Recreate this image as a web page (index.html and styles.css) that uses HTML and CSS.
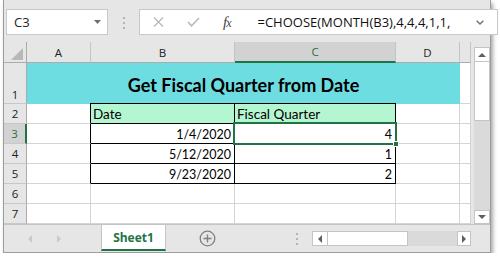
FILE: index.html
```html
<!DOCTYPE html>
<html>
<head>
<meta charset="utf-8">
<link rel="stylesheet" href="styles.css">
</head>
<body>
<div class="window">
  <div class="formulabar">
    <div class="namebox">
      <span class="nb-text">C3</span>
      <svg class="nb-arrow" width="7" height="4" viewBox="0 0 7 4"><path d="M0 0H7L3.5 4Z" fill="#6f6f6f"/></svg>
    </div>
    <svg class="fdots" width="3" height="12" viewBox="0 0 3 12"><rect x="0" y="0" width="2" height="2" fill="#b4b4b4"/><rect x="0" y="5" width="2" height="2" fill="#b4b4b4"/><rect x="0" y="10" width="2" height="2" fill="#b4b4b4"/></svg>
    <div class="fbox">
      <svg class="ico-x" width="11" height="10" viewBox="0 0 11 10"><path d="M1 0.5L10 9.5M10 0.5L1 9.5" stroke="#b9b9b9" stroke-width="1.3" fill="none"/></svg>
      <svg class="ico-check" width="13" height="10" viewBox="0 0 13 10"><path d="M1 5L4.5 8.8L12 1" stroke="#b9b9b9" stroke-width="1.5" fill="none"/></svg>
      <span class="fx">f<span class="fx-x">x</span></span>
      <span class="ftext">=CHOOSE(MONTH(B3),4,4,4,1,1,</span>
      <svg class="ico-chev" width="8" height="5" viewBox="0 0 8 5"><path d="M0.7 0.7L4 4L7.3 0.7" stroke="#707070" stroke-width="1.4" fill="none"/></svg>
    </div>
  </div>

  <div class="main">
    <div class="grid">
      <div class="ch corner"><svg width="12" height="12" viewBox="0 0 12 12"><path d="M12 0V12H0Z" fill="#b8b8b8"/></svg></div>
      <div class="ch">A</div>
      <div class="ch">B</div>
      <div class="ch sel">C</div>
      <div class="ch">D</div>
      <div class="ch part"></div>

      <div class="rh r1">1</div>
      <div class="title">Get Fiscal Quarter from Date</div>
      <div class="c"></div>

      <div class="rh">2</div>
      <div class="c tl"></div>
      <div class="c tb th">Date</div>
      <div class="c tb th">Fiscal Quarter</div>
      <div class="c"></div>
      <div class="c"></div>

      <div class="rh sel">3</div>
      <div class="c tl"></div>
      <div class="c tb num">1/4/2020</div>
      <div class="c tb num active">4<span class="handle"></span></div>
      <div class="c"></div>
      <div class="c"></div>

      <div class="rh">4</div>
      <div class="c tl"></div>
      <div class="c tb num">5/12/2020</div>
      <div class="c tb num">1</div>
      <div class="c"></div>
      <div class="c"></div>

      <div class="rh">5</div>
      <div class="c tl"></div>
      <div class="c tb num">9/23/2020</div>
      <div class="c tb num">2</div>
      <div class="c"></div>
      <div class="c"></div>

      <div class="rh">6</div>
      <div class="c"></div>
      <div class="c"></div>
      <div class="c"></div>
      <div class="c"></div>
      <div class="c"></div>

      <div class="rh">7</div>
      <div class="c"></div>
      <div class="c"></div>
      <div class="c"></div>
      <div class="c"></div>
      <div class="c"></div>
    </div>
    <div class="vscroll">
      <div class="vbtn"><svg width="8" height="4" viewBox="0 0 8 4"><path d="M0 4H8L4 0Z" fill="#5f5f5f"/></svg></div>
      <div class="vthumb"></div>
      <div class="vbtn vdown"><svg width="8" height="4" viewBox="0 0 8 4"><path d="M0 0H8L4 4Z" fill="#5f5f5f"/></svg></div>
    </div>
  </div>

  <div class="tabbar">
    <svg class="nav nav-l" width="4" height="8" viewBox="0 0 4 8"><path d="M4 0V8L0 4Z" fill="#c9c9c9"/></svg>
    <svg class="nav nav-r" width="4" height="8" viewBox="0 0 4 8"><path d="M0 0V8L4 4Z" fill="#c9c9c9"/></svg>
    <div class="tab">Sheet1</div>
    <svg class="plus" width="17" height="17" viewBox="0 0 17 17"><circle cx="8.5" cy="8.5" r="7.3" stroke="#808080" stroke-width="1.3" fill="none"/><path d="M8.5 4.5V12.5M4.5 8.5H12.5" stroke="#808080" stroke-width="1.4"/></svg>
    <svg class="tdots" width="3" height="12" viewBox="0 0 3 12"><rect x="0" y="0" width="2" height="2" fill="#b4b4b4"/><rect x="0" y="5" width="2" height="2" fill="#b4b4b4"/><rect x="0" y="10" width="2" height="2" fill="#b4b4b4"/></svg>
    <div class="hscroll">
      <div class="hbtn"><svg width="4" height="8" viewBox="0 0 4 8"><path d="M4 0V8L0 4Z" fill="#5f5f5f"/></svg></div>
      <div class="hthumb"></div>
      <div class="hbtn hright"><svg width="4" height="8" viewBox="0 0 4 8"><path d="M0 0V8L4 4Z" fill="#5f5f5f"/></svg></div>
    </div>
  </div>
</div>
</body>
</html>
```

FILE: styles.css
```css
html, body {
  margin: 0;
  padding: 0;
  background: #ffffff;
}

.window {
  margin-left: 3px;
  width: 488px;
  height: 253px;
  box-sizing: border-box;
  border: 1px solid #9c9c9c;
  border-top: none;
  background: #e6e6e6;
  box-shadow: 2px 3px 4px rgba(0, 0, 0, 0.35);
  display: flex;
  flex-direction: column;
  font-family: "Open Sans", "Noto Sans", sans-serif;
}

/* formula bar */
.formulabar {
  height: 42px;
  flex-shrink: 0;
  box-sizing: border-box;
  padding-top: 9px;
  display: flex;
  align-items: flex-start;
}

.namebox {
  margin-left: 2px;
  width: 102px;
  height: 26px;
  flex-shrink: 0;
  box-sizing: border-box;
  border: 1px solid #c8c8c8;
  background: #ffffff;
  display: flex;
  align-items: center;
  justify-content: space-between;
  padding: 0 6px 0 7px;
  font-size: 13px;
  color: #222;
}

.fdots {
  margin-left: 15px;
  margin-top: 8px;
  flex-shrink: 0;
}

.fbox {
  margin-left: 13px;
  width: 359px;
  height: 26px;
  flex-shrink: 0;
  box-sizing: border-box;
  border: 1px solid #c8c8c8;
  background: #ffffff;
  display: flex;
  align-items: center;
  padding: 0 13px 0 13px;
}

.ico-x { flex-shrink: 0; }
.ico-check { margin-left: 23px; flex-shrink: 0; }

.fx {
  margin-left: 23px;
  font-family: "Liberation Serif", serif;
  font-style: italic;
  font-size: 15px;
  color: #444;
  letter-spacing: -1px;
}
.fx-x {
  font-size: 12px;
}

.ftext {
  margin-left: 27px;
  font-size: 13px;
  color: #111;
  white-space: nowrap;
}

.ico-chev {
  margin-left: auto;
  flex-shrink: 0;
}

/* sheet */
.main {
  height: 182px;
  flex-shrink: 0;
  display: flex;
}

.grid {
  width: 467px;
  flex-shrink: 0;
  display: grid;
  grid-template-columns: 23px 64px 144px 161px 64px 11px;
  grid-template-rows: 21px 41px repeat(6, 20px);
  background: #ffffff;
}

.ch {
  background: #e6e6e6;
  border-right: 1px solid #c4c4c4;
  border-bottom: 1px solid #ababab;
  box-sizing: border-box;
  display: flex;
  align-items: center;
  justify-content: center;
  font-size: 11.5px;
  color: #222;
}

.ch.corner {
  justify-content: flex-end;
  align-items: flex-end;
  padding: 0 3px 2px 0;
  border-right-color: #ababab;
}

.ch.sel {
  background: #d2d2d2;
  color: #217346;
  border-bottom: 2px solid #217346;
}

.rh {
  background: #e6e6e6;
  border-right: 1px solid #ababab;
  border-bottom: 1px solid #c8c8c8;
  box-sizing: border-box;
  display: flex;
  align-items: center;
  justify-content: center;
  font-size: 11.5px;
  color: #222;
}

.rh.r1 {
  align-items: flex-end;
  padding-bottom: 1px;
}

.rh.sel {
  background: #d2d2d2;
  color: #217346;
  border-right: 2px solid #217346;
}

.c {
  border-right: 1px solid #d4d4d4;
  border-bottom: 1px solid #d4d4d4;
  box-sizing: border-box;
  display: flex;
  align-items: center;
  padding: 1px 3px 0 2px;
  font-family: "Lato", "Open Sans", sans-serif;
  font-size: 13.5px;
  color: #000;
  white-space: nowrap;
}

.title {
  grid-column: 2 / span 4;
  background: linear-gradient(#000, #000) 63px 100% / 306px 1px no-repeat, #6edde1;
  box-sizing: border-box;
  display: flex;
  align-items: center;
  justify-content: center;
  padding-top: 2px;
  font-family: "Lato", "Open Sans", sans-serif;
  font-weight: bold;
  font-size: 18px;
  color: #000;
}

.c.tl { border-right-color: #000; }
.c.tb {
  border-right-color: #000;
  border-bottom-color: #000;
}
.c.th { background: #b5f6d2; }
.c.num {
  justify-content: flex-end;
  font-size: 12.5px;
}

.c.active { position: relative; }
.c.active::after {
  content: "";
  position: absolute;
  left: -2px;
  top: -2px;
  right: -2px;
  bottom: -2px;
  border: 2px solid #217346;
  z-index: 2;
}
.handle {
  position: absolute;
  right: -4px;
  bottom: -4px;
  width: 6px;
  height: 6px;
  box-sizing: border-box;
  background: #217346;
  border: 1px solid #ffffff;
  z-index: 3;
}

/* vertical scrollbar */
.vscroll {
  width: 16px;
  flex-shrink: 0;
  margin-left: 3px;
  margin-top: 5px;
  height: 177px;
  background: #dadada;
  display: flex;
  flex-direction: column;
}
.vbtn {
  height: 15px;
  box-sizing: border-box;
  border: 1px solid #c4c4c4;
  background: #ffffff;
  display: flex;
  align-items: center;
  justify-content: center;
}
.vthumb {
  height: 59px;
  box-sizing: border-box;
  border: 1px solid #c4c4c4;
  border-top: none;
  background: #ffffff;
}
.vdown {
  margin-top: auto;
  height: 14px;
}

/* tab bar */
.tabbar {
  height: 28px;
  flex-shrink: 0;
  box-sizing: border-box;
  border-top: 1px solid #c4c4c4;
  display: flex;
  align-items: center;
}

.nav-l { margin-left: 24px; }
.nav-r { margin-left: 25px; }

.tab {
  margin-left: 40px;
  align-self: flex-start;
  width: 65px;
  height: 26px;
  box-sizing: border-box;
  background: #ffffff;
  border-left: 1px solid #c4c4c4;
  border-right: 1px solid #c4c4c4;
  border-bottom: 2px solid #217346;
  display: flex;
  align-items: center;
  justify-content: center;
  font-weight: bold;
  font-size: 12px;
  color: #217346;
}

.plus { margin-left: 33px; }
.tdots { margin-left: 80px; }

.hscroll {
  margin-left: 13px;
  width: 159px;
  height: 15px;
  background: #dadada;
  display: flex;
}
.hbtn {
  width: 16px;
  box-sizing: border-box;
  border: 1px solid #c4c4c4;
  background: #ffffff;
  display: flex;
  align-items: center;
  justify-content: center;
}
.hthumb {
  width: 80px;
  box-sizing: border-box;
  border: 1px solid #c4c4c4;
  border-left: none;
  background: #ffffff;
}
.hright {
  margin-left: auto;
  width: 14px;
}
```
